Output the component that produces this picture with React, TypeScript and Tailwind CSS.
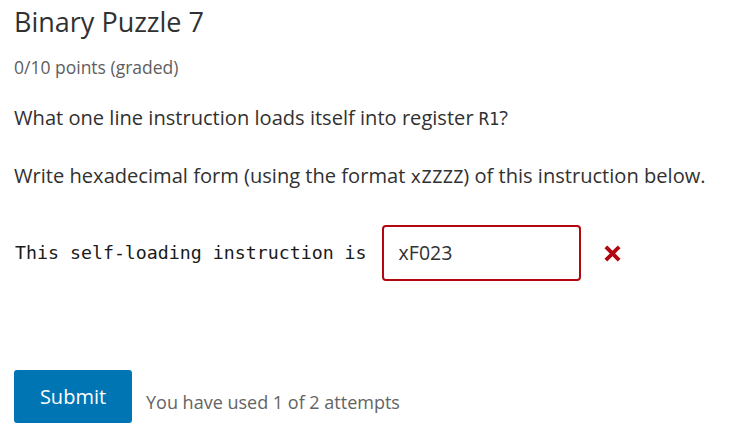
const TimesIcon = () => (
    <svg viewBox="0 0 16 16" className="ml-[23px] w-[17px] h-[17px] text-[#b20610]">
        <path d="M3 3 L13 13 M13 3 L3 13" stroke="currentColor" strokeWidth="3.6" strokeLinecap="square" />
    </svg>
);

const App = () => {
    return (
        <div className="w-[740px] h-[444px] bg-white overflow-hidden px-[14px] font-['Open_Sans',sans-serif]">
            <h2 className="pt-[4px] text-[27px] leading-[36px] text-[#313131] font-normal">Binary Puzzle 7</h2>
            <div className="mt-[17px] text-[17.5px] leading-[20px] text-[#5e5e5e]">0/10 points (graded)</div>

            <p className="mt-[26px] text-[20.1px] leading-[30px] text-[#313131]">
                What one line instruction loads itself into register <code className="font-['DejaVu_Sans_Mono',monospace] text-[17px]">R1</code>?
            </p>
            <p className="mt-[27px] text-[20.1px] leading-[30px] text-[#313131]">
                Write hexadecimal form (using the format <code className="font-['DejaVu_Sans_Mono',monospace] text-[17.5px]">xZZZZ</code>) of this instruction below.
            </p>

            <div className="mt-[33px] flex items-center">
                <span className="ml-[1px] font-['DejaVu_Sans_Mono',monospace] text-[18.25px] text-[#1a1a1a] whitespace-pre">This self-loading instruction is</span>
                <div className="ml-[15px] w-[199px] h-[56px] border-2 border-[#b20610] rounded-[4px] flex items-center px-[15px] text-[19.5px] text-[#313131]">
                    xF023
                </div>
                <TimesIcon />
            </div>

            <div className="mt-[89px] flex items-end">
                <button className="w-[118px] h-[53px] bg-[#0075b4] text-white text-[20px] rounded-[3px]">Submit</button>
                <span className="ml-[14px] mb-[9px] text-[18px] leading-[24px] text-[#646464]">You have used 1 of 2 attempts</span>
            </div>
        </div>
    );
};

export default App;
